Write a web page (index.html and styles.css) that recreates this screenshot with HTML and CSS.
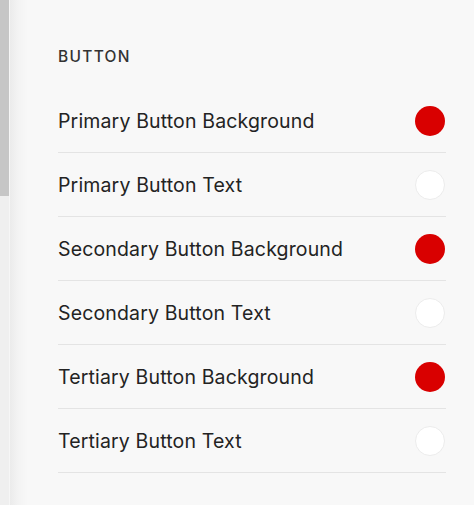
FILE: index.html
```html
<!DOCTYPE html>
<html>
<head>
<meta charset="utf-8">
<link rel="stylesheet" href="styles.css">
</head>
<body>
<div class="page">
  <div class="rail"><div class="thumb"></div></div>
  <div class="panel">
    <h2 class="heading">BUTTON</h2>
    <ul class="list">
      <li class="row"><span class="label">Primary Button Background</span><span class="swatch red"></span></li>
      <li class="row"><span class="label">Primary Button Text</span><span class="swatch white"></span></li>
      <li class="row"><span class="label">Secondary Button Background</span><span class="swatch red"></span></li>
      <li class="row"><span class="label">Secondary Button Text</span><span class="swatch white"></span></li>
      <li class="row"><span class="label">Tertiary Button Background</span><span class="swatch red"></span></li>
      <li class="row"><span class="label">Tertiary Button Text</span><span class="swatch white"></span></li>
    </ul>
  </div>
</div>
</body>
</html>
```

FILE: styles.css
```css
html, body {
  margin: 0;
  padding: 0;
  height: 100%;
  background: #f8f8f8;
}
body {
  font-family: Inter, "Noto Sans", sans-serif;
  color: #222;
}
.page {
  display: flex;
  min-height: 505px;
}
.rail {
  width: 9px;
  background: #efefef;
  flex: none;
}
.thumb {
  height: 196px;
  background: #c6c6c6;
}
.panel {
  flex: 1;
  padding: 0 28px 0 48px;
  background: linear-gradient(to right, #ebebeb 0, #f3f3f3 8px, #f8f8f8 18px);
  border-left: 1px solid #f6f6f6;
}
.heading {
  margin: 0;
  padding-top: 47px;
  height: 44px;
  box-sizing: border-box;
  font-size: 15.5px;
  font-weight: 500;
  letter-spacing: 1.3px;
  line-height: 20px;
  color: #333;
}
.list {
  list-style: none;
  margin: 0;
  padding: 0;
  margin-top: 42px;
}
.row {
  display: flex;
  align-items: center;
  justify-content: space-between;
  height: 63px;
  border-bottom: 1px solid #e4e4e4;
}
.label {
  font-size: 19.5px;
  letter-spacing: 0.15px;
  color: #232323;
}
.swatch {
  width: 30px;
  height: 30px;
  border-radius: 50%;
  box-sizing: border-box;
  margin-right: 1px;
}
.red {
  background: #d90000;
}
.white {
  background: #ffffff;
  border: 1px solid #ececec;
}
```
